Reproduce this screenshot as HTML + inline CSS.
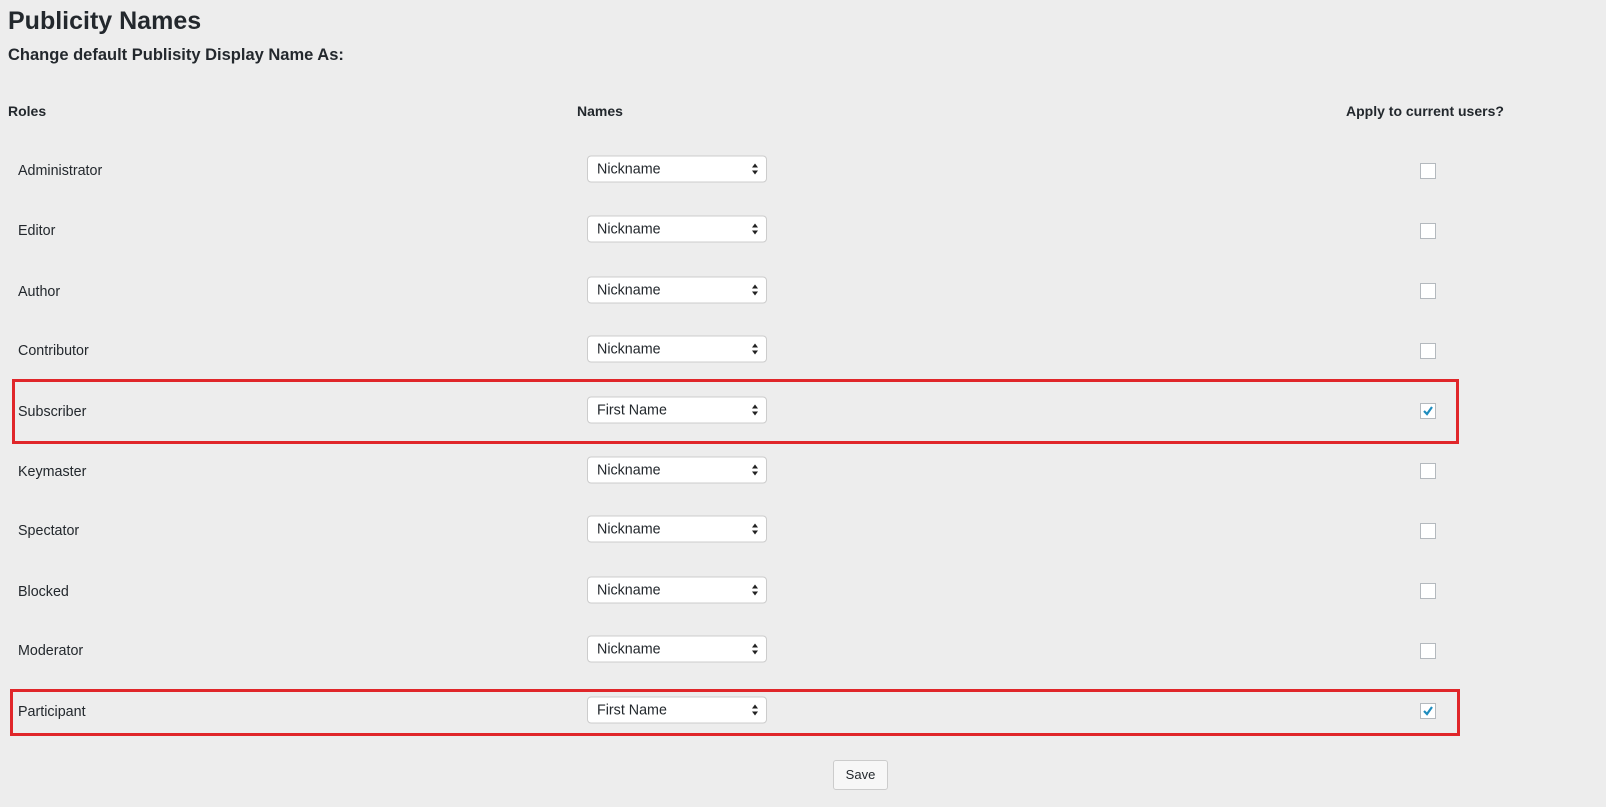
<!DOCTYPE html>
<html><head><style>
body{margin:0;width:1606px;height:807px;background:#ededed;font-family:"Liberation Sans",sans-serif;color:#23282d;position:relative;overflow:hidden}
.a{position:absolute;white-space:nowrap}
h1{position:absolute;left:8px;top:7px;margin:0;font-size:25px;font-weight:bold}
.sub{left:8px;top:46px;font-size:16.5px;font-weight:bold}
.hd{top:103px;font-size:14px;font-weight:bold}
.role{left:18px;font-size:14.3px;transform:translateY(-50%);margin-top:2px}
.sel{left:587px;width:180px;height:27px;background:#fff;border:1px solid #ccc;border-radius:4px;box-sizing:border-box;font-size:14.3px;line-height:27px;padding-left:9px;transform:translateY(-50%)}
.sel:after{content:"";position:absolute;right:8px;top:7px;border:3.5px solid transparent;border-bottom:4px solid #222;border-top:0}
.sel:before{content:"";position:absolute;right:8px;top:14px;border:3.5px solid transparent;border-top:4px solid #222;border-bottom:0}
.cb{left:1420px;width:16px;height:16px;background:#fff;border:1px solid #b4b9be;box-sizing:border-box;transform:translateY(-50%)}
.red{border:3px solid #e0262a;box-sizing:border-box}
.save{left:833px;top:760px;width:55px;height:30px;border:1px solid #ccc;border-radius:3px;background:#f7f7f7;box-sizing:border-box;font-size:13px;text-align:center;line-height:28px}
</style></head><body>
<h1>Publicity Names</h1>
<div class="a sub">Change default Publisity Display Name As:</div>
<div class="a hd" style="left:8px">Roles</div>
<div class="a hd" style="left:577px">Names</div>
<div class="a hd" style="left:1346px">Apply to current users?</div>
<div class="a red" style="left:12px;top:379px;width:1447px;height:65px"></div>
<div class="a red" style="left:10px;top:689px;width:1450px;height:47px"></div>
<div class="a role" style="top:169px">Administrator</div><div class="a sel" style="top:169px">Nickname</div><div class="a cb" style="top:171px"></div>
<div class="a role" style="top:229px">Editor</div><div class="a sel" style="top:229px">Nickname</div><div class="a cb" style="top:231px"></div>
<div class="a role" style="top:290px">Author</div><div class="a sel" style="top:290px">Nickname</div><div class="a cb" style="top:291px"></div>
<div class="a role" style="top:349px">Contributor</div><div class="a sel" style="top:349px">Nickname</div><div class="a cb" style="top:351px"></div>
<div class="a role" style="top:410px">Subscriber</div><div class="a sel" style="top:410px">First Name</div><div class="a cb" style="top:411px"><svg width="14" height="14" viewBox="0 0 14 14" style="position:absolute;left:0;top:0"><path d="M3 7l3 3 5-7" fill="none" stroke="#1e8cbe" stroke-width="2.2"/></svg></div>
<div class="a role" style="top:470px">Keymaster</div><div class="a sel" style="top:470px">Nickname</div><div class="a cb" style="top:471px"></div>
<div class="a role" style="top:529px">Spectator</div><div class="a sel" style="top:529px">Nickname</div><div class="a cb" style="top:531px"></div>
<div class="a role" style="top:590px">Blocked</div><div class="a sel" style="top:590px">Nickname</div><div class="a cb" style="top:591px"></div>
<div class="a role" style="top:649px">Moderator</div><div class="a sel" style="top:649px">Nickname</div><div class="a cb" style="top:651px"></div>
<div class="a role" style="top:710px">Participant</div><div class="a sel" style="top:710px">First Name</div><div class="a cb" style="top:711px"><svg width="14" height="14" viewBox="0 0 14 14" style="position:absolute;left:0;top:0"><path d="M3 7l3 3 5-7" fill="none" stroke="#1e8cbe" stroke-width="2.2"/></svg></div>
<div class="a save">Save</div>
</body></html>
